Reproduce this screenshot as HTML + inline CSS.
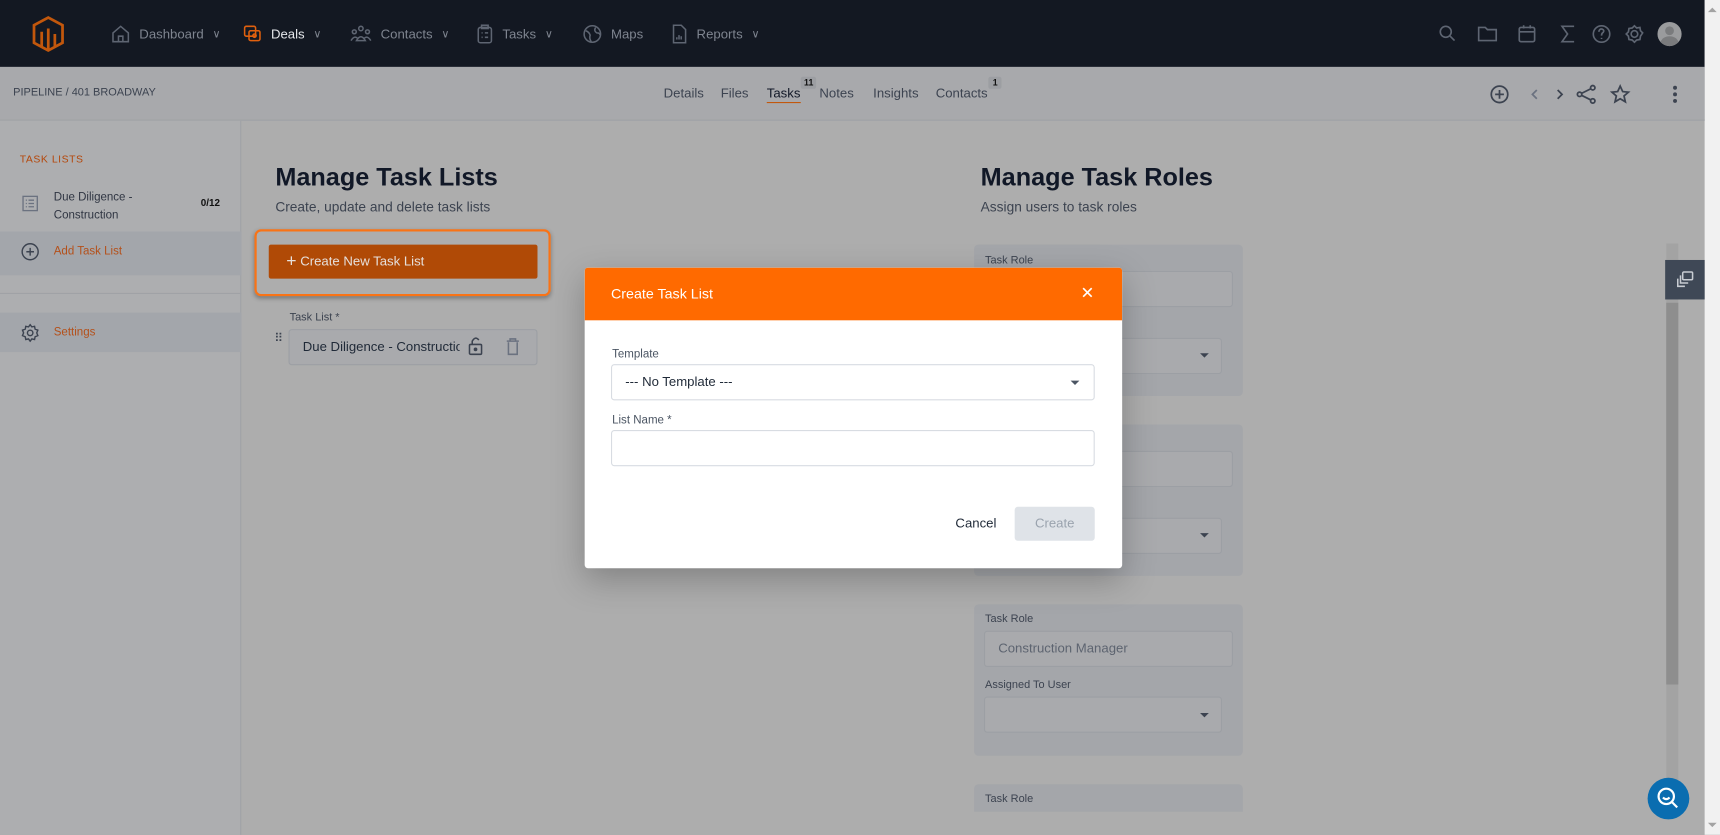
<!DOCTYPE html>
<html><head><meta charset="utf-8"><style>
*{box-sizing:border-box;margin:0;padding:0}
html,body{width:1720px;height:835px;overflow:hidden;background:#adadad;font-family:"Liberation Sans",sans-serif}
#w{width:1568px;height:761px;transform:scale(1.09694);transform-origin:0 0;position:relative;background:#adadad}
.abs{position:absolute}
.nav{left:0;top:0;width:1554px;height:61px;background:#131822}
.ni{position:absolute;top:22px;color:#7f8590;font-size:12px;display:flex;align-items:center;gap:8px}
.ni svg{stroke:#5e6572;fill:none;stroke-width:1.4}
.sub{left:0;top:61px;width:1554px;height:49px;background:#a8a9ac;border-bottom:1px solid #9fa1a5}
.tab{position:absolute;top:78px;font-size:12px;color:#3c4350}
.side{left:0;top:110px;width:220px;height:651px;background:#adaeb0;border-right:1px solid #a0a2a6}
.card{position:absolute;left:888px;width:245px;background:#a4a6aa;border-radius:4px}
.inp{position:absolute;border:1px solid #9c9fa4;border-radius:3px;background:#a9aaad}
.lbl{position:absolute;font-size:10px;color:#3c4350}
.caret{position:absolute;width:0;height:0;border-left:4px solid transparent;border-right:4px solid transparent;border-top:4px solid #3c4350}
</style></head><body><div id="w">
<div class="abs nav"></div>
<svg class="abs" style="left:28px;top:14px" width="32" height="34" viewBox="0 0 32 34" fill="none" stroke="#c2570c" stroke-width="2.5"><path d="M16 2 L29 9 V25 L16 32 L3 25 V9 Z"/><path d="M10 28 V15 M16 31 V12 M22 28 V17"/></svg>
<div class="ni" style="left:101px"><svg width="18" height="18" viewBox="0 0 18 18"><path d="M2 8 L9 2 L16 8 V16 H2 Z M7 16 V11 H11 V16"/></svg>Dashboard <span style="font-size:10px">∨</span></div>
<div class="ni" style="left:221px;color:#e5e7eb"><svg width="18" height="18" viewBox="0 0 18 18" style="stroke:#e0600e"><rect x="2" y="2" width="10" height="9" rx="1.5"/><rect x="6" y="6" width="10" height="9" rx="1.5"/><circle cx="11" cy="10.5" r="1.5"/></svg>Deals <span style="font-size:10px;color:#7f8590">∨</span></div>
<div class="ni" style="left:319px"><svg width="20" height="18" viewBox="0 0 20 18"><circle cx="10" cy="4" r="2"/><circle cx="4" cy="7" r="1.8"/><circle cx="16" cy="7" r="1.8"/><path d="M6 15 Q10 8 14 15 Z M1 15 Q4 10 7 13 M19 15 Q16 10 13 13"/></svg>Contacts <span style="font-size:10px">∨</span></div>
<div class="ni" style="left:434px"><svg width="16" height="18" viewBox="0 0 16 18"><rect x="2" y="3" width="12" height="14" rx="2"/><rect x="5" y="1" width="6" height="3"/><path d="M5 8h1 M8 8h3 M5 12h1 M8 12h3"/></svg>Tasks <span style="font-size:10px">∨</span></div>
<div class="ni" style="left:531px"><svg width="18" height="18" viewBox="0 0 18 18"><circle cx="9" cy="9" r="7.5"/><path d="M3 6 Q6 7 7 10 Q6 13 8 16 M12 3 Q10 6 13 8 Q16 8 16 10"/></svg>Maps</div>
<div class="ni" style="left:611px"><svg width="16" height="18" viewBox="0 0 16 18"><path d="M3 1 H10 L14 5 V17 H3 Z"/><path d="M6 14V12 M8 14V10 M10 14V11"/></svg>Reports <span style="font-size:10px">∨</span></div>
<svg class="abs" style="left:1310px;top:21px" width="220" height="20" viewBox="0 0 220 20" fill="none" stroke="#5e6572" stroke-width="1.5"><circle cx="8" cy="8" r="5"/><path d="M12 12 L16 16"/><path d="M38 4 H44 L46 6 H54 V16 H38 Z"/><rect x="75" y="4" width="14" height="13" rx="1.5"/><path d="M75 8 H89 M79 2 V5 M85 2 V5"/><path d="M125 3 H114 L119 10 L114 17 H125" /><circle cx="150" cy="10" r="7.5"/><path d="M147.5 8 Q148 5 150.5 5.5 Q153 6.5 151.5 8.5 Q150 9.5 150 11.5 M150 13.5 V14.5"/><circle cx="180" cy="10" r="3"/><path d="M180 2.5 L182 4.5 L185 4 L185.5 7 L187.5 9 L185.5 12 L185 15 L182 15.5 L180 17.5 L178 15.5 L175 15 L174.5 12 L172.5 10 L174.5 8 L175 5 L178 4.5 Z"/></svg>
<div class="abs" style="left:1511px;top:20px;width:22px;height:22px;border-radius:50%;background:#9a9b9d;overflow:hidden"><div style="position:absolute;left:7px;top:4px;width:8px;height:8px;border-radius:50%;background:#7a7b7d"></div><div style="position:absolute;left:3px;top:13px;width:16px;height:12px;border-radius:50%;background:#7a7b7d"></div></div>
<div class="abs" style="left:1554px;top:0;width:14px;height:761px;background:#f1f1f1"></div>
<div class="abs" style="left:1557px;top:7px;border-left:4px solid transparent;border-right:4px solid transparent;border-bottom:4px solid #a3a3a3"></div>
<div class="abs" style="left:1557px;top:750px;border-left:4px solid transparent;border-right:4px solid transparent;border-top:4px solid #a3a3a3"></div>
<div class="abs sub"></div>
<div class="abs" style="left:12px;top:79px;font-size:10px;color:#3c4350">PIPELINE / 401 BROADWAY</div>
<div class="tab" style="left:605px">Details</div><div class="tab" style="left:657px">Files</div>
<div class="tab" style="left:699px;color:#111827;border-bottom:1px solid #c2570c;padding-bottom:1px">Tasks</div>
<div class="abs" style="left:730px;top:70px;font-size:8px;font-weight:bold;color:#111;background:#9c9ea2;padding:1px 3px;border-radius:2px">11</div>
<div class="tab" style="left:747px">Notes</div><div class="tab" style="left:796px">Insights</div><div class="tab" style="left:853px">Contacts</div>
<div class="abs" style="left:901px;top:70px;font-size:8px;font-weight:bold;color:#111;background:#9c9ea2;padding:1px 4px;border-radius:2px">1</div>
<svg class="abs" style="left:1358px;top:76px" width="180" height="20" viewBox="0 0 180 20" fill="none" stroke="#3c4350" stroke-width="1.6"><circle cx="9" cy="10" r="7.5"/><path d="M9 6V14 M5 10H13"/><path d="M43 6 L39 10 L43 14" stroke="#6b7280"/><path d="M62 6 L66 10 L62 14"/><circle cx="82" cy="10" r="2"/><circle cx="94" cy="4" r="2"/><circle cx="94" cy="16" r="2"/><path d="M84 9 L92 5 M84 11 L92 15"/><path d="M119 2.5 L121.3 7.5 L126.5 8 L122.5 11.5 L123.7 16.8 L119 14 L114.3 16.8 L115.5 11.5 L111.5 8 L116.7 7.5 Z"/><circle cx="169" cy="4" r="1" fill="#3c4350"/><circle cx="169" cy="10" r="1" fill="#3c4350"/><circle cx="169" cy="16" r="1" fill="#3c4350"/></svg>
<div class="abs side"></div>
<div class="abs" style="left:18px;top:140px;font-size:9.5px;color:#b4470a;letter-spacing:.5px">TASK LISTS</div>
<svg class="abs" style="left:20px;top:178px" width="15" height="15" viewBox="0 0 15 15" fill="none" stroke="#6b7280" stroke-width="1.2"><rect x="1" y="1" width="13" height="13"/><path d="M3.5 4.5h1 M6 4.5h5 M3.5 7.5h1 M6 7.5h5 M3.5 10.5h1 M6 10.5h5"/></svg>
<div class="abs" style="left:49px;top:172px;font-size:10.5px;color:#2f3542;line-height:16px">Due Diligence -<br>Construction</div>
<div class="abs" style="left:183px;top:180px;font-size:9px;font-weight:bold;color:#111">0/12</div>
<div class="abs" style="left:0;top:211px;width:220px;height:40px;background:#a3a6ab"></div>
<svg class="abs" style="left:19px;top:221px" width="17" height="17" viewBox="0 0 17 17" fill="none" stroke="#3c4350" stroke-width="1.3"><circle cx="8.5" cy="8.5" r="7.3"/><path d="M8.5 5V12 M5 8.5H12"/></svg>
<div class="abs" style="left:49px;top:223px;font-size:10.5px;color:#b4501a">Add Task List</div>
<div class="abs" style="left:0;top:267px;width:220px;height:1px;background:#a0a2a6"></div>
<div class="abs" style="left:0;top:285px;width:220px;height:36px;background:#a3a6ab"></div>
<svg class="abs" style="left:19px;top:295px" width="17" height="17" viewBox="0 0 17 17" fill="none" stroke="#3c4350" stroke-width="1.3"><circle cx="8.5" cy="8.5" r="2.5"/><path d="M8.5 1 L10 3 L12.5 2.5 L13 5 L15.5 6 L14.5 8.5 L15.5 11 L13 12 L12.5 14.5 L10 14 L8.5 16 L7 14 L4.5 14.5 L4 12 L1.5 11 L2.5 8.5 L1.5 6 L4 5 L4.5 2.5 L7 3 Z"/></svg>
<div class="abs" style="left:49px;top:297px;font-size:10.5px;color:#b4501a">Settings</div>
<div class="abs" style="left:251px;top:148px;font-size:23px;font-weight:bold;color:#111827">Manage Task Lists</div>
<div class="abs" style="left:251px;top:182px;font-size:12.5px;color:#3c4350">Create, update and delete task lists</div>
<div class="abs" style="left:232px;top:209px;width:270px;height:61px;border:2.5px solid #f97316;border-radius:6px;box-shadow:0 2px 4px rgba(0,0,0,.3)"></div>
<div class="abs" style="left:245px;top:223px;width:245px;height:31px;background:#b04a06;border-radius:2px;color:#e6e0dc;font-size:12px;line-height:31px;padding-left:16px"><span style="font-size:16px;vertical-align:-1px">+</span> Create New Task List</div>
<div class="abs" style="left:264px;top:284px;font-size:10px;color:#3c4350">Task List *</div>
<div class="abs" style="left:250px;top:307px;font-size:11px;color:#3c4350;line-height:4px;letter-spacing:-1px">⠿</div>
<div class="inp" style="left:263px;top:300px;width:227px;height:33px"></div>
<div class="abs" style="left:276px;top:309px;font-size:12px;color:#1f2937;width:143px;overflow:hidden;white-space:nowrap">Due Diligence - Construction</div>
<svg class="abs" style="left:426px;top:306px" width="50" height="20" viewBox="0 0 50 20" fill="none" stroke="#3c4350" stroke-width="1.4"><rect x="2" y="8" width="11" height="9" rx="1"/><path d="M4.5 8 V5 Q7.5 0 10.5 4"/><circle cx="7.5" cy="12.5" r="1" fill="#3c4350"/><path d="M36 5 H47 M39 5 V3 H44 V5 M37.5 6 V17 H45.5 V6" stroke="#6b7280"/></svg>
<div class="abs" style="left:894px;top:148px;font-size:23px;font-weight:bold;color:#111827">Manage Task Roles</div>
<div class="abs" style="left:894px;top:182px;font-size:12.5px;color:#3c4350">Assign users to task roles</div>
<div class="card" style="top:223px;height:138px"></div>
<div class="lbl" style="left:898px;top:232px">Task Role</div>
<div class="inp" style="left:897px;top:247px;width:227px;height:33px"></div>
<div class="inp" style="left:897px;top:308px;width:217px;height:33px"></div><div class="caret" style="left:1094px;top:322px"></div>
<div class="card" style="top:387px;height:138px"></div>
<div class="inp" style="left:897px;top:411px;width:227px;height:33px"></div>
<div class="inp" style="left:897px;top:472px;width:217px;height:33px"></div><div class="caret" style="left:1094px;top:486px"></div>
<div class="card" style="top:551px;height:138px"></div>
<div class="lbl" style="left:898px;top:559px">Task Role</div>
<div class="inp" style="left:897px;top:575px;width:227px;height:33px"></div>
<div class="abs" style="left:910px;top:584px;font-size:12px;color:#5d6470">Construction Manager</div>
<div class="lbl" style="left:898px;top:619px">Assigned To User</div>
<div class="inp" style="left:897px;top:635px;width:217px;height:33px"></div><div class="caret" style="left:1094px;top:650px"></div>
<div class="card" style="top:715px;height:25px;border-radius:4px 4px 0 0"></div>
<div class="lbl" style="left:898px;top:723px">Task Role</div>
<div class="abs" style="left:1519px;top:222px;width:11px;height:518px;background:#a3a3a3"></div>
<div class="abs" style="left:1519px;top:276px;width:11px;height:348px;background:#8e8e8e"></div>
<div class="abs" style="left:1518px;top:237px;width:36px;height:36px;background:#3f4856"></div>
<svg class="abs" style="left:1528px;top:246px" width="17" height="17" viewBox="0 0 17 17" fill="none" stroke="#c8ccd2" stroke-width="1.4"><rect x="6" y="2" width="9" height="7" rx="1"/><path d="M4 5 V12 H11 M1.5 8 V15 H8"/></svg>
<div class="abs" style="left:1502px;top:709px;width:38px;height:38px;border-radius:50%;background:#0a6db0"></div>
<svg class="abs" style="left:1509px;top:716px" width="24" height="24" viewBox="0 0 24 24" fill="none" stroke="#fff" stroke-width="2"><circle cx="10" cy="10" r="7"/><path d="M15 15 L20 20"/><path d="M7 11 Q10 14 13 11"/></svg>
<div class="abs" style="left:533px;top:244px;width:490px;height:274px;background:#fff;border-radius:3px;box-shadow:0 10px 30px rgba(0,0,0,.25);overflow:hidden">
<div style="height:48px;background:#ff6a00;color:#fff;font-size:13px;line-height:48px;padding-left:24px">Create Task List<span style="position:absolute;left:452px;top:0;font-size:15px">✕</span></div>
<div style="position:absolute;left:25px;top:73px;font-size:10.5px;color:#4b5563">Template</div>
<div style="position:absolute;left:24px;top:88px;width:441px;height:33px;border:1px solid #d8dce2;border-radius:3px;font-size:12px;color:#1f2937;line-height:31px;padding-left:12px">--- No Template ---</div>
<div class="caret" style="left:443px;top:103px;border-top-color:#4b5563"></div>
<div style="position:absolute;left:25px;top:133px;font-size:10.5px;color:#4b5563">List Name *</div>
<div style="position:absolute;left:24px;top:148px;width:441px;height:33px;border:1px solid #d8dce2;border-radius:3px"></div>
<div style="position:absolute;left:338px;top:226px;font-size:12px;color:#1f2937">Cancel</div>
<div style="position:absolute;left:392px;top:218px;width:73px;height:31px;background:#dfe3e8;border-radius:3px;font-size:12px;color:#9aa3ae;text-align:center;line-height:31px">Create</div>
</div>
</div></body></html>
